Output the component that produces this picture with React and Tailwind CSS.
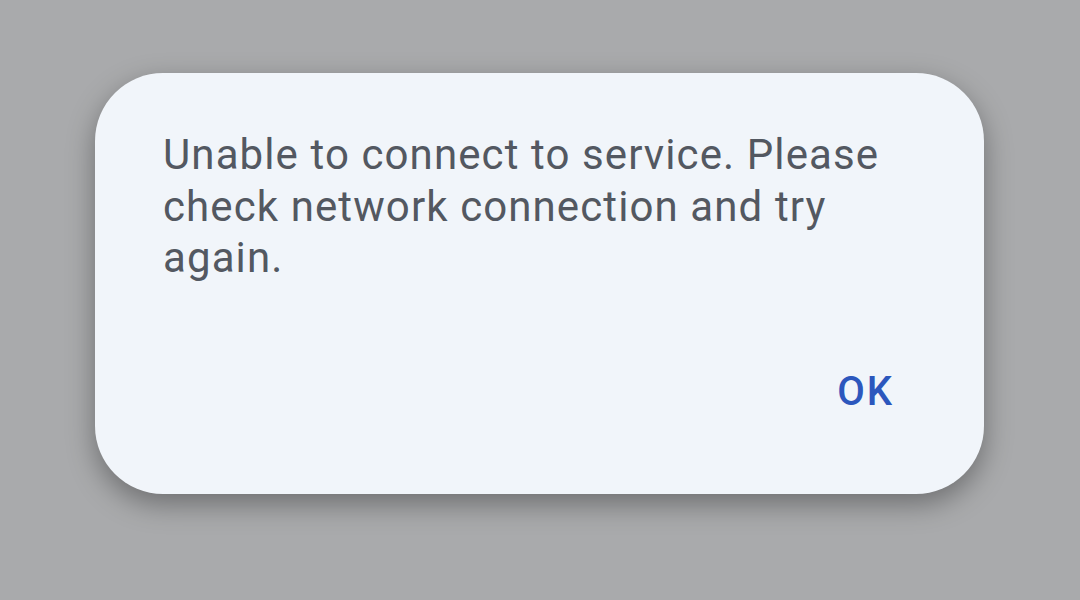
export default function App() {
  return (
    <div className="w-[1080px] h-[600px] bg-[#a9aaac] overflow-hidden" style={{ fontFamily: 'Roboto, "Noto Sans", sans-serif' }}>
      <div className="ml-[95px] mt-[73px] w-[889px] h-[421px] bg-[#f1f5fa] rounded-[68px] shadow-[0_10px_28px_rgba(0,0,0,0.35)] flex flex-col">
        <p className="pl-[68px] pr-[90px] mt-[56px] text-[42px] leading-[51.5px] tracking-[1.1px] text-[#535861]">
          Unable to connect to service. Please check network connection and try again.
        </p>
        <div className="flex justify-end mt-auto mb-[80px] pr-[90px]">
          <button className="text-[40px] leading-[44px] font-medium text-[#2c57bd] tracking-[2px]">OK</button>
        </div>
      </div>
    </div>
  );
}
